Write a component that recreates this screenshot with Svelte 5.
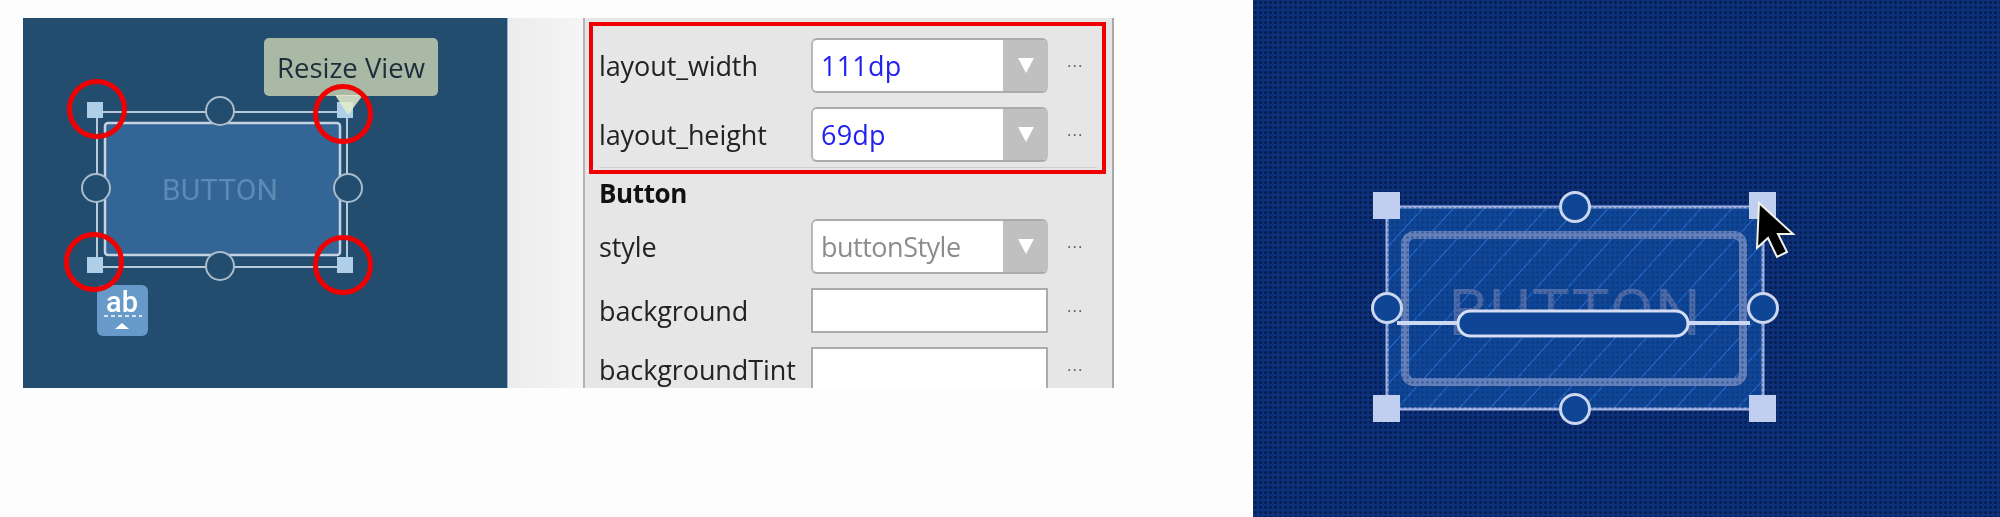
<script lang="ts">
    const rows = [
        { label: "layout_width", value: "111dp" },
        { label: "layout_height", value: "69dp" }
    ];
    const pick = [
        [97, 109],
        [343, 114],
        [94, 262],
        [343, 265]
    ];
    const leftHandles = [
        [87, 102],
        [337, 102],
        [87, 257],
        [337, 257]
    ];
    const leftAnchors = [
        [220, 111],
        [96, 188],
        [348, 188],
        [220, 266]
    ];
    const rightHandles = [
        [1373, 192],
        [1749, 192],
        [1373, 395],
        [1749, 395]
    ];
    const rightAnchors = [
        [1575, 207],
        [1387, 308],
        [1763, 308],
        [1575, 409]
    ];
</script>

<div class="page">
    <div class="shot">
        <div class="canvas">
            <!-- svg coords are page coords, minus the shot's offset -->
            <svg width="484" height="370" viewBox="23 18 484 370">
                <rect class="outer" x="97" y="112" width="250" height="155" />
                <rect class="body" x="105" y="123" width="235" height="132" rx="3" />
                <text class="btn-label" x="220" y="200" text-anchor="middle">BUTTON</text>
                {#each leftAnchors as [x, y]}
                    <circle class="anchor" cx={x} cy={y} r="14" />
                {/each}
                {#each leftHandles as [x, y]}
                    <rect class="handle" {x} {y} width="16" height="16" />
                {/each}
                <g class="ab">
                    <rect x="97" y="285" width="51" height="51" rx="6" />
                    <text x="122" y="312" text-anchor="middle">ab</text>
                    <line x1="104" y1="316" x2="142" y2="316" />
                    <path d="M115 329 L122 323 L129 329 Z" />
                </g>
                <rect class="tip" x="264" y="38" width="174" height="58" rx="5" />
                <text class="tip-text" x="351" y="78" text-anchor="middle">Resize View</text>
                <path class="tail" d="M335 95 L363 95 L348 115 Z" />
                {#each pick as [x, y]}
                    <circle class="pick" cx={x} cy={y} r="27.5" />
                {/each}
            </svg>
        </div>
        <div class="strip"></div>
        <div class="props">
            <div class="marked">
                {#each rows as row}
                    <div class="row">
                        <span class="label">{row.label}</span>
                        <div class="combo">
                            <span class="value">{row.value}</span>
                            <span class="arrow"></span>
                        </div>
                        <span class="more">...</span>
                    </div>
                {/each}
                <div class="divider"></div>
            </div>
            <div class="heading">Button</div>
            <div class="rest">
                <div class="row">
                    <span class="label">style</span>
                    <div class="combo">
                        <span class="value muted">buttonStyle</span>
                        <span class="arrow"></span>
                    </div>
                    <span class="more">...</span>
                </div>
                <div class="row short">
                    <span class="label">background</span>
                    <div class="field"></div>
                    <span class="more">...</span>
                </div>
                <div class="row short">
                    <span class="label">backgroundTint</span>
                    <div class="field"></div>
                    <span class="more">...</span>
                </div>
            </div>
        </div>
    </div>

    <div class="dark">
        <svg width="747" height="517" viewBox="1253 0 747 517">
            <defs>
                <pattern id="hatch" width="23" height="23" patternUnits="userSpaceOnUse" patternTransform="rotate(-48)">
                    <line x1="0" y1="0" x2="23" y2="0" stroke="#2a70dc" stroke-width="1.8" />
                </pattern>
                <pattern id="dots" width="5" height="5" patternUnits="userSpaceOnUse">
                    <circle cx="2.5" cy="2.5" r="1.2" fill="#062260" />
                </pattern>
            </defs>
            <rect x="1387" y="207" width="376" height="202" fill="#0f4595" />
            <rect x="1387" y="207" width="376" height="202" fill="url(#hatch)" />
            <rect class="d-frame" x="1387" y="207" width="376" height="202" />
            <rect class="d-body" x="1405" y="235" width="338" height="147" rx="9" />
            <text class="d-label" x="1575" y="335" text-anchor="middle">BUTTON</text>
            <rect x="1387" y="207" width="376" height="202" fill="url(#dots)" opacity="0.4" />
            <line class="d-base" x1="1397" y1="323" x2="1458" y2="323" />
            <line class="d-base" x1="1688" y1="323" x2="1750" y2="323" />
            <rect class="d-pill" x="1458" y="311" width="230" height="25" rx="12.5" />
            {#each rightAnchors as [x, y]}
                <circle class="d-anchor" cx={x} cy={y} r="14.5" />
            {/each}
            {#each rightHandles as [x, y]}
                <rect class="d-handle" {x} {y} width="27" height="27" />
            {/each}
            <path class="cursor" d="M1759 203 L1757 248 L1768 238 L1777 257 L1787 252 L1778 234 L1793 234 Z" />
        </svg>
    </div>
</div>

<style>
    :global(body) {
        background: #fdfdfd;
    }

    .page {
        display: flex;
        height: 517px;
        width: 2000px;
        overflow: hidden;
        font-family: "Open Sans", "Liberation Sans", sans-serif;
    }

    .shot {
        display: flex;
        width: 1091px;
        height: 370px;
        margin: 18px 0 0 23px;
        overflow: hidden;
        filter: blur(0.5px);
    }

    .canvas {
        width: 484px;
        background: #224d6f;
        border-right: 1px solid #8fb4d4;
        flex: none;
    }

    svg {
        display: block;
    }

    .outer {
        fill: none;
        stroke: #b9c9d8;
        stroke-width: 2;
    }

    .body {
        fill: #336696;
        stroke: #c6d3e2;
        stroke-width: 2.5;
    }

    .btn-label {
        font-family: Roboto, sans-serif;
        font-size: 30px;
        fill: #5b8ab5;
    }

    .anchor {
        fill: #224d6f;
        stroke: #a9bccb;
        stroke-width: 2;
    }

    .handle {
        fill: #afcfe8;
    }

    .ab rect {
        fill: #6799c9;
    }

    .ab text {
        font-family: Roboto, sans-serif;
        font-size: 29px;
        font-weight: 500;
        fill: #fff;
    }

    .ab line {
        stroke: #fff;
        stroke-width: 1.5;
        stroke-dasharray: 4 3;
    }

    .ab path {
        fill: #fff;
    }

    .tip {
        fill: #aab9a5;
    }

    .tip-text {
        font-size: 27.5px;
        fill: #1f2d3a;
    }

    .tail {
        fill: #e5eccb;
        opacity: 0.85;
    }

    .pick {
        fill: none;
        stroke: #f00000;
        stroke-width: 5;
    }

    .strip {
        width: 75px;
        flex: none;
        background: linear-gradient(to right, #ececec, #f5f5f5);
    }

    .props {
        flex: 1;
        background: #e6e6e6;
        border-left: 2px solid #b4b4b4;
        border-right: 2px solid #a8a8a8;
        color: #222;
        font-size: 27px;
    }

    .marked {
        width: 503px;
        height: 132px;
        margin: 4px 0 0 4px;
        padding: 12px 0 0 6px;
        border: 4px solid #f00000;
    }

    .row {
        display: flex;
        align-items: center;
        height: 55px;
        margin-bottom: 14px;
    }

    .row.short {
        height: 45px;
    }

    .label {
        width: 212px;
        flex: none;
        letter-spacing: -0.1px;
    }

    .combo,
    .field {
        width: 237px;
        height: 100%;
        flex: none;
        box-sizing: border-box;
        background: #fff;
        border: 2px solid #ababab;
    }

    .combo {
        display: flex;
        align-items: center;
        justify-content: space-between;
        border-radius: 6px;
        overflow: hidden;
        border-right: none;
        border-left-color: #b8b8b8;
    }

    .value {
        padding-left: 8px;
        color: #2222f0;
        letter-spacing: 0.2px;
    }

    .value.muted {
        color: #8c8c8c;
        letter-spacing: -0.5px;
    }

    .arrow {
        position: relative;
        width: 45px;
        height: 100%;
        background: #c0c0c0;
        display: flex;
        align-items: center;
        justify-content: center;
    }

    .arrow::after {
        content: "";
        border-left: 8px solid transparent;
        border-right: 8px solid transparent;
        border-top: 15px solid #fff;
    }

    .more {
        margin-left: 19px;
        font-size: 17px;
        color: #666;
        letter-spacing: 1px;
        transform: translateY(-5px);
    }

    .divider {
        height: 1px;
        background: #cfcfcf;
        margin: -9px 5px 0 0;
    }

    .heading {
        margin: 1px 0 8px 14px;
        font-weight: 700;
        font-size: 26px;
        line-height: 36px;
        letter-spacing: -0.4px;
        color: #111;
    }

    .rest {
        padding-left: 14px;
    }

    .dark {
        width: 747px;
        height: 517px;
        margin-left: auto;
        flex: none;
        background-color: #0c3079;
        background-image: radial-gradient(circle, #051c4e 1.2px, transparent 1.6px);
        background-size: 5px 5px;
        filter: blur(0.4px);
    }

    .d-frame {
        fill: none;
        stroke: #9fb3e3;
        stroke-width: 3;
    }

    .d-body {
        fill: none;
        stroke: #6480bb;
        stroke-width: 8;
    }

    .d-label {
        font-family: Roboto, sans-serif;
        font-size: 64px;
        fill: #4a6aa8;
        letter-spacing: 1px;
    }

    .d-base {
        stroke: #cdd8f3;
        stroke-width: 4;
    }

    .d-pill {
        fill: #0f4595;
        stroke: #d4ddf3;
        stroke-width: 3;
    }

    .d-anchor {
        fill: #0f4595;
        stroke: #ccd7ee;
        stroke-width: 3;
    }

    .d-handle {
        fill: #c0cff0;
    }

    .cursor {
        fill: #000;
        stroke: #f2f2e6;
        stroke-width: 2;
    }
</style>
